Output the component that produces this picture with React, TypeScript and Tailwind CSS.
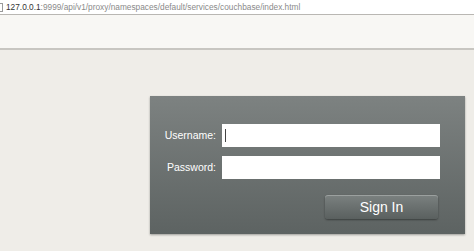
export default function App() {
  return (
    <div className="flex h-[251px] w-[474px] flex-col overflow-hidden bg-[#efede8]" style={{ fontFamily: '"Liberation Sans", Arial, sans-serif' }}>
      <div className="flex h-[15px] items-center gap-[3px] border-b border-[#b9b7b3] bg-white text-[8.3px] leading-none">
        <span className="ml-[-4px] inline-block h-[9px] w-[7px] border border-[#9a9a9a] bg-white" />
        <span className="text-[#333]">
          127.0.0.1<span className="text-[#8a8a8a]">:9999/api/v1/proxy/namespaces/default/services/couchbase/index.html</span>
        </span>
      </div>
      <div className="h-[35px] border-b-2 border-[#c8c6c1] bg-[#f8f7f4]" />
      <div className="flex flex-1 justify-end pr-[9px] pt-[46px]">
        <div className="flex h-[138px] w-[315px] flex-col bg-gradient-to-b from-[#7d8281] to-[#5d6362] pr-[25px] pt-[28px] shadow-[0_1px_2px_rgba(0,0,0,0.35)]">
          <div className="flex items-center justify-end gap-[6px]">
            <label className="text-[10.5px] text-white">Username:</label>
            <div className="flex h-[23px] w-[218px] items-center bg-white pl-[3px]">
              <span className="h-[13px] w-px bg-[#444]" />
            </div>
          </div>
          <div className="mt-[9px] flex items-center justify-end gap-[6px]">
            <label className="text-[10.5px] text-white">Password:</label>
            <div className="h-[23px] w-[218px] bg-white" />
          </div>
          <div className="mt-[16px] flex justify-end pr-[2px]">
            <button className="h-[24px] w-[113px] rounded-[3px] bg-gradient-to-b from-[#7b8180] to-[#5a605f] text-[14px] text-white shadow-[0_1px_2px_rgba(0,0,0,0.4),inset_0_1px_0_rgba(255,255,255,0.25)]">
              Sign In
            </button>
          </div>
        </div>
      </div>
    </div>
  );
}
